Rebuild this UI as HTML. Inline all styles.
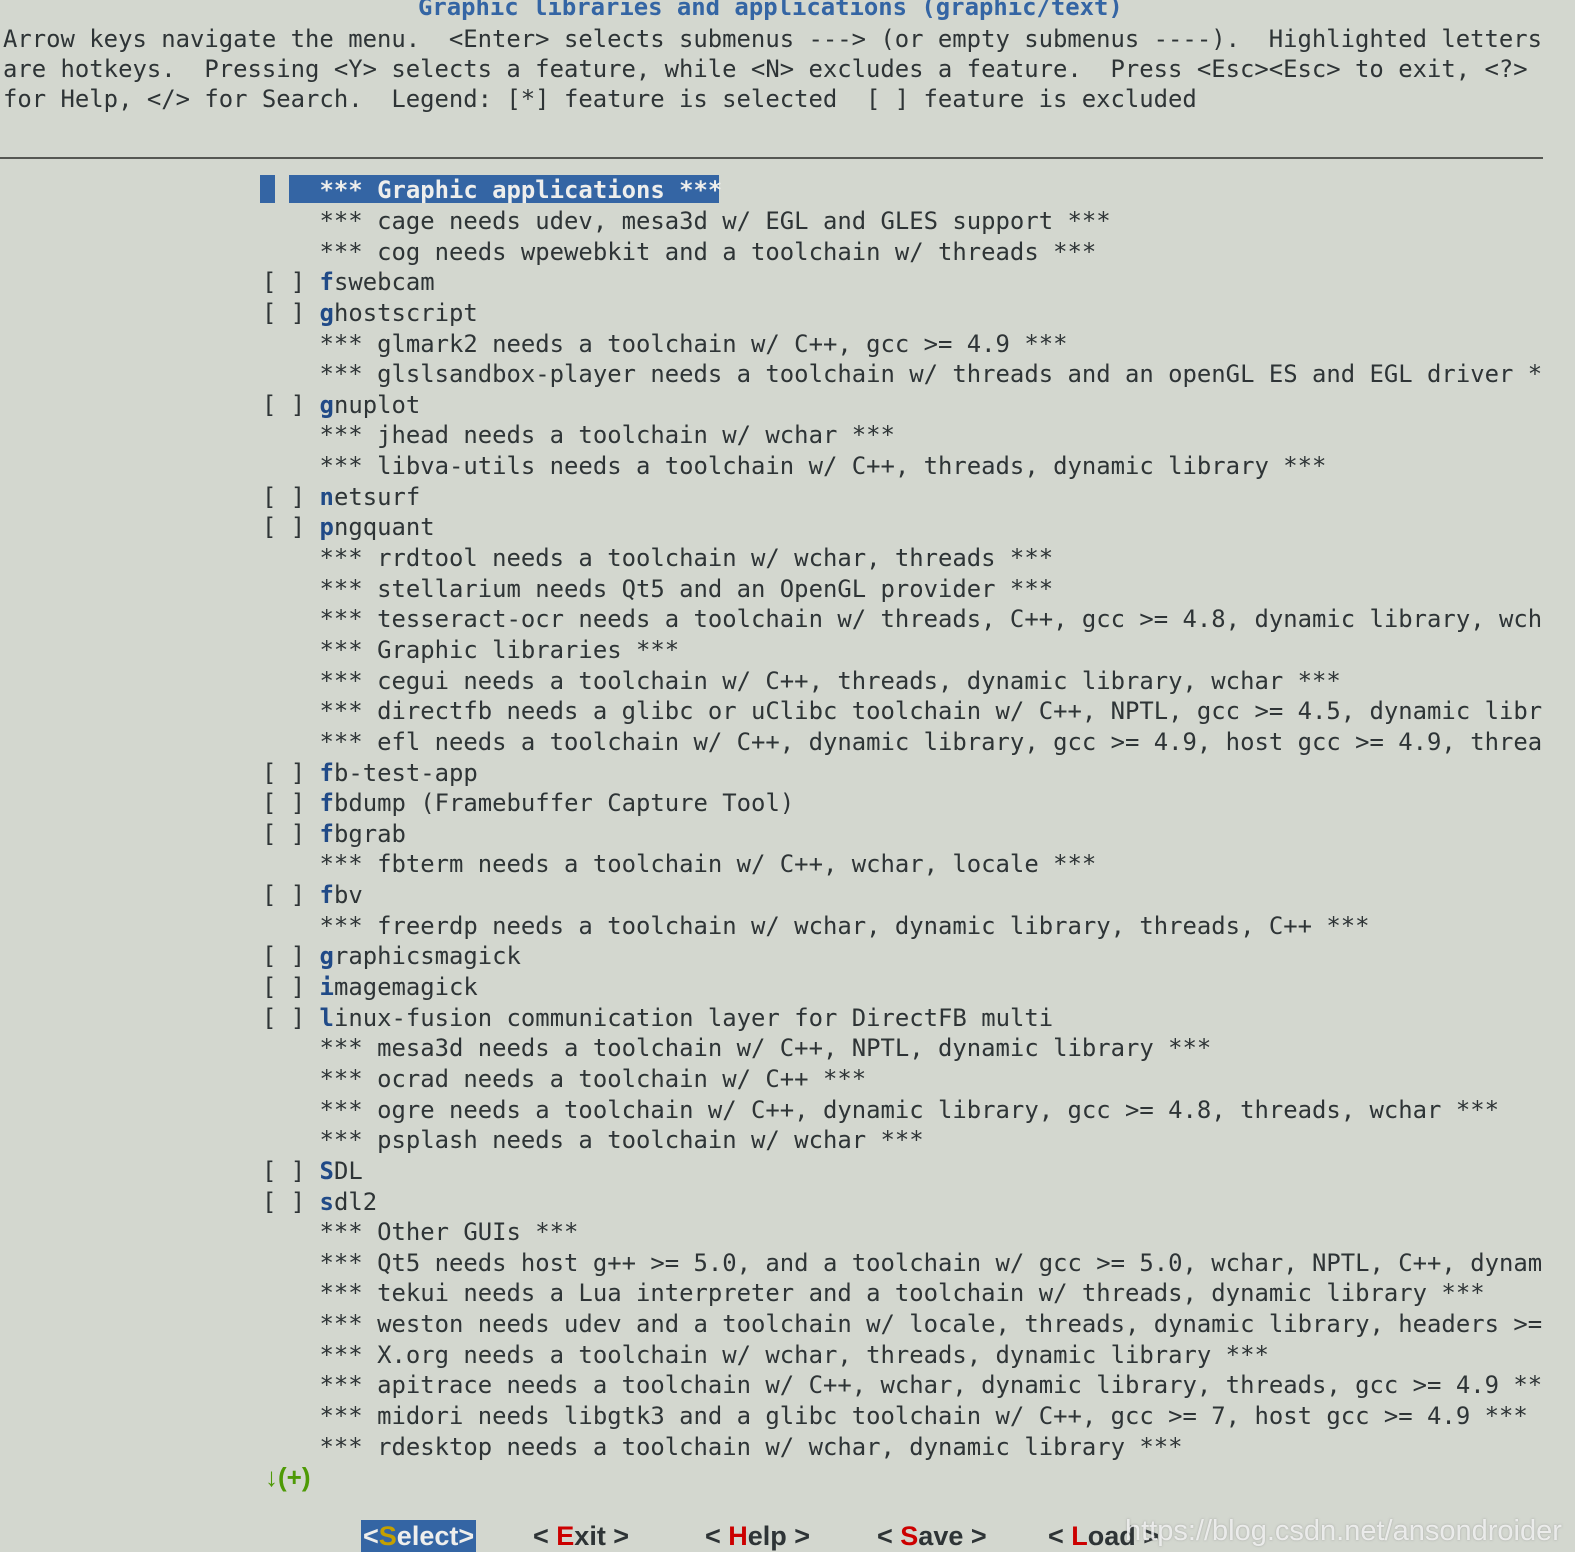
<!DOCTYPE html>
<html><head><meta charset="utf-8"><style>
html,body{margin:0;padding:0;}
body{width:1575px;height:1552px;background:#d3d7cf;position:relative;overflow:hidden;font-family:"DejaVu Sans Mono","Liberation Mono",monospace;font-size:23.9px;color:#2e3436;}
.r{position:absolute;white-space:pre;line-height:30.45px;height:30.45px;}
#list .r{position:relative;line-height:30.65px;height:30.65px;}
.t{color:#3465a4;font-weight:bold;}
.k{color:#204a87;font-weight:bold;}
.sep{position:absolute;left:0;top:157px;width:1543px;height:2px;background:#555753;}
.btn{position:absolute;top:1520px;font-family:"Liberation Sans Narrow","Liberation Sans",sans-serif;font-weight:bold;font-size:27px;line-height:32px;white-space:pre;color:#2e3436;}
.red{color:#cc0000;}
.wm{position:absolute;left:1125px;top:1515px;font-family:"Liberation Sans",sans-serif;font-size:29px;color:rgba(245,245,245,0.85);text-shadow:0 0 2px rgba(120,120,120,0.5);white-space:pre;}
</style></head><body>
<div class="r t" style="left:418px;top:-8px;">Graphic libraries and applications (graphic/text)</div>
<div class="r" style="left:3px;top:24px;">Arrow keys navigate the menu.  &lt;Enter&gt; selects submenus ---&gt; (or empty submenus ----).  Highlighted letters</div>
<div class="r" style="left:3px;top:54px;">are hotkeys.  Pressing &lt;Y&gt; selects a feature, while &lt;N&gt; excludes a feature.  Press &lt;Esc&gt;&lt;Esc&gt; to exit, &lt;?&gt;</div>
<div class="r" style="left:3px;top:84px;">for Help, &lt;/&gt; for Search.  Legend: [*] feature is selected  [ ] feature is excluded</div>
<div class="sep"></div>
<div style="position:absolute;left:260px;top:175px;width:15px;height:28px;background:#3465a4;"></div>
<div style="position:absolute;left:289px;top:175px;width:430px;height:28px;background:#3465a4;"></div>
<div class="r" style="left:262px;top:175px;color:#eeeeec;font-weight:bold;">    *** Graphic applications ***</div>
<div id="list" style="position:absolute;left:262px;top:206px;">
<div class="r">    *** cage needs udev, mesa3d w/ EGL and GLES support ***</div>
<div class="r">    *** cog needs wpewebkit and a toolchain w/ threads ***</div>
<div class="r">[ ] <span class="k">f</span>swebcam</div>
<div class="r">[ ] <span class="k">g</span>hostscript</div>
<div class="r">    *** glmark2 needs a toolchain w/ C++, gcc &gt;= 4.9 ***</div>
<div class="r">    *** glslsandbox-player needs a toolchain w/ threads and an openGL ES and EGL driver *</div>
<div class="r">[ ] <span class="k">g</span>nuplot</div>
<div class="r">    *** jhead needs a toolchain w/ wchar ***</div>
<div class="r">    *** libva-utils needs a toolchain w/ C++, threads, dynamic library ***</div>
<div class="r">[ ] <span class="k">n</span>etsurf</div>
<div class="r">[ ] <span class="k">p</span>ngquant</div>
<div class="r">    *** rrdtool needs a toolchain w/ wchar, threads ***</div>
<div class="r">    *** stellarium needs Qt5 and an OpenGL provider ***</div>
<div class="r">    *** tesseract-ocr needs a toolchain w/ threads, C++, gcc &gt;= 4.8, dynamic library, wch</div>
<div class="r">    *** Graphic libraries ***</div>
<div class="r">    *** cegui needs a toolchain w/ C++, threads, dynamic library, wchar ***</div>
<div class="r">    *** directfb needs a glibc or uClibc toolchain w/ C++, NPTL, gcc &gt;= 4.5, dynamic libr</div>
<div class="r">    *** efl needs a toolchain w/ C++, dynamic library, gcc &gt;= 4.9, host gcc &gt;= 4.9, threa</div>
<div class="r">[ ] <span class="k">f</span>b-test-app</div>
<div class="r">[ ] <span class="k">f</span>bdump (Framebuffer Capture Tool)</div>
<div class="r">[ ] <span class="k">f</span>bgrab</div>
<div class="r">    *** fbterm needs a toolchain w/ C++, wchar, locale ***</div>
<div class="r">[ ] <span class="k">f</span>bv</div>
<div class="r">    *** freerdp needs a toolchain w/ wchar, dynamic library, threads, C++ ***</div>
<div class="r">[ ] <span class="k">g</span>raphicsmagick</div>
<div class="r">[ ] <span class="k">i</span>magemagick</div>
<div class="r">[ ] <span class="k">l</span>inux-fusion communication layer for DirectFB multi</div>
<div class="r">    *** mesa3d needs a toolchain w/ C++, NPTL, dynamic library ***</div>
<div class="r">    *** ocrad needs a toolchain w/ C++ ***</div>
<div class="r">    *** ogre needs a toolchain w/ C++, dynamic library, gcc &gt;= 4.8, threads, wchar ***</div>
<div class="r">    *** psplash needs a toolchain w/ wchar ***</div>
<div class="r">[ ] <span class="k">S</span>DL</div>
<div class="r">[ ] <span class="k">s</span>dl2</div>
<div class="r">    *** Other GUIs ***</div>
<div class="r">    *** Qt5 needs host g++ &gt;= 5.0, and a toolchain w/ gcc &gt;= 5.0, wchar, NPTL, C++, dynam</div>
<div class="r">    *** tekui needs a Lua interpreter and a toolchain w/ threads, dynamic library ***</div>
<div class="r">    *** weston needs udev and a toolchain w/ locale, threads, dynamic library, headers &gt;=</div>
<div class="r">    *** X.org needs a toolchain w/ wchar, threads, dynamic library ***</div>
<div class="r">    *** apitrace needs a toolchain w/ C++, wchar, dynamic library, threads, gcc &gt;= 4.9 **</div>
<div class="r">    *** midori needs libgtk3 and a glibc toolchain w/ C++, gcc &gt;= 7, host gcc &gt;= 4.9 ***</div>
<div class="r">    *** rdesktop needs a toolchain w/ wchar, dynamic library ***</div>
<div class="r" style="color:#4e9a06;font-weight:bold;font-family:'Liberation Sans Narrow','Liberation Sans',sans-serif;font-size:26px;padding-left:3px;">↓(+)</div>
</div>
<div class="btn" style="left:361px;background:#3465a4;color:#eeeeec;padding:0 2px;">&lt;<span style="color:#c4a000;">S</span>elect&gt;</div>
<div class="btn" style="left:533px;">&lt; <span class="red">E</span>xit &gt;</div>
<div class="btn" style="left:705px;">&lt; <span class="red">H</span>elp &gt;</div>
<div class="btn" style="left:877px;">&lt; <span class="red">S</span>ave &gt;</div>
<div class="btn" style="left:1048px;">&lt; <span class="red">L</span>oad &gt;</div>
<div class="wm">https://blog.csdn.net/ansondroider</div>
</body></html>
